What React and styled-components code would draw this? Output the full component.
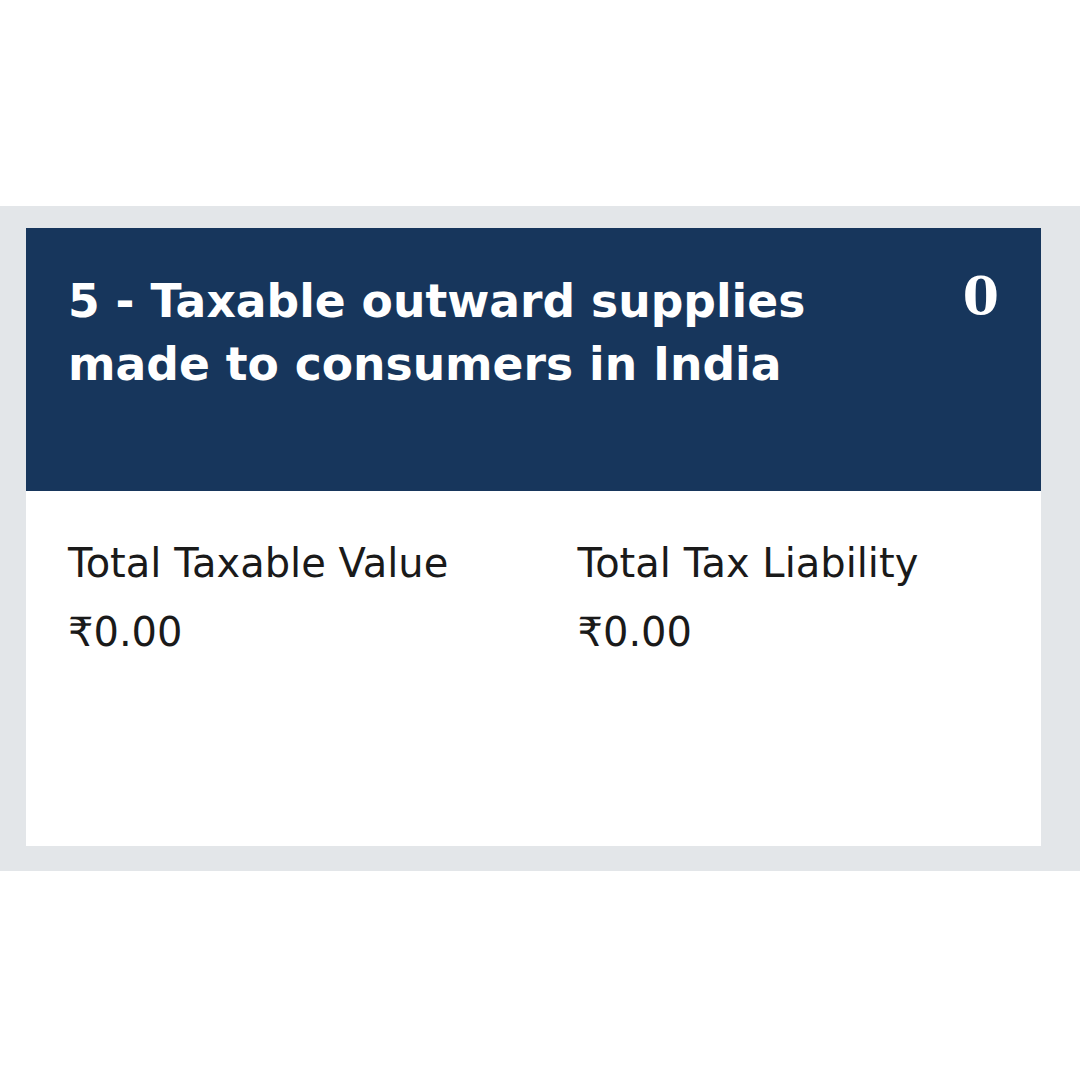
import React from 'react';
import styled, { createGlobalStyle } from 'styled-components';

const GlobalStyle = createGlobalStyle`
    html, body {
        margin: 0;
        padding: 0;
        background: #ffffff;
    }
`;

const Page = styled.div`
    width: 1080px;
    height: 1080px;
    padding-top: 206px;
    box-sizing: border-box;
    background: #ffffff;
`;

const Band = styled.div`
    background: #e3e6e9;
    padding: 22px 39px 25px 26px;
`;

const Card = styled.div`
    background: #ffffff;
    display: flex;
    flex-direction: column;
`;

const Header = styled.div`
    background: #17365c;
    height: 263px;
    box-sizing: border-box;
    padding: 42px 42px 0 42px;
    display: flex;
    justify-content: space-between;
    align-items: flex-start;
`;

const Title = styled.div`
    color: #ffffff;
    font-family: "DejaVu Sans", Verdana, sans-serif;
    font-weight: bold;
    font-size: 45.6px;
    line-height: 63px;
    max-width: 800px;
`;

const Count = styled.div`
    color: #ffffff;
    font-family: "DejaVu Serif", "Liberation Serif", serif;
    font-weight: bold;
    font-size: 52px;
    line-height: 56px;
    margin-top: -2px;
`;

const Body = styled.div`
    height: 355px;
    display: grid;
    grid-template-columns: 1fr 1fr;
    padding-top: 48px;
    box-sizing: border-box;
`;

const Stat = styled.div`
    padding-left: ${props => props.$offset}px;
    font-family: "DejaVu Sans", Verdana, sans-serif;
    color: #1a1a1a;
`;

const Label = styled.div`
    font-size: 40px;
    line-height: 48px;
`;

const Amount = styled.div`
    font-size: 40px;
    line-height: 48px;
    margin-top: 21px;
`;

const stats = [
    { label: 'Total Taxable Value', value: '₹0.00', offset: 42 },
    { label: 'Total Tax Liability', value: '₹0.00', offset: 44 }
];

const App = () => (
    <Page>
        <GlobalStyle />
        <Band>
            <Card>
                <Header>
                    <Title>5 - Taxable outward supplies made to consumers in India</Title>
                    <Count>0</Count>
                </Header>
                <Body>
                    {stats.map(s => (
                        <Stat key={s.label} $offset={s.offset}>
                            <Label>{s.label}</Label>
                            <Amount>{s.value}</Amount>
                        </Stat>
                    ))}
                </Body>
            </Card>
        </Band>
    </Page>
);

export default App;
